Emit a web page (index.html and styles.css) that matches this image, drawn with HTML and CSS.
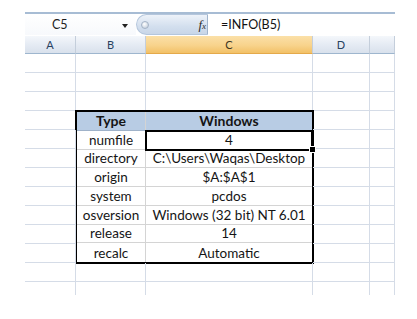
FILE: index.html
```html
<!DOCTYPE html>
<html>
<head>
<meta charset="utf-8">
<link rel="stylesheet" href="styles.css">
</head>
<body>
<div class="sheet">
  <div class="fbar">
    <div class="namebox"><span class="ref">C5</span><span class="arrow"></span></div>
    <div class="capsule">
      <span class="grip"></span>
      <span class="fx"><i>f</i><i class="x">x</i></span>
    </div>
    <div class="formula">=INFO(B5)</div>
  </div>
  <div class="cols">
    <div class="ch">A</div>
    <div class="ch">B</div>
    <div class="ch sel">C</div>
    <div class="ch">D</div>
    <div class="ch"></div>
  </div>
  <div class="grid">
    <div class="c"></div><div class="c"></div><div class="c"></div><div class="c"></div><div class="c"></div>
    <div class="c"></div><div class="c"></div><div class="c"></div><div class="c"></div><div class="c"></div>
    <div class="c"></div><div class="c"></div><div class="c"></div><div class="c"></div><div class="c"></div>

    <div class="c r4"></div>
    <div class="tbl">
      <div class="t th">Type</div><div class="t th">Windows</div>
      <div class="t">numfile</div><div class="t active">4</div>
      <div class="t">directory</div><div class="t">C:\Users\Waqas\Desktop</div>
      <div class="t">origin</div><div class="t">$A:$A$1</div>
      <div class="t">system</div><div class="t">pcdos</div>
      <div class="t">osversion</div><div class="t">Windows (32 bit) NT 6.01</div>
      <div class="t">release</div><div class="t">14</div>
      <div class="t last">recalc</div><div class="t last">Automatic</div>
    </div>
    <div class="c"></div><div class="c"></div>
    <div class="c"></div><div class="c"></div><div class="c"></div>
    <div class="c"></div><div class="c"></div><div class="c"></div>
    <div class="c"></div><div class="c"></div><div class="c"></div>
    <div class="c"></div><div class="c"></div><div class="c"></div>
    <div class="c"></div><div class="c"></div><div class="c"></div>
    <div class="c"></div><div class="c"></div><div class="c"></div>
    <div class="c"></div><div class="c"></div><div class="c"></div>

    <div class="c"></div><div class="c"></div><div class="c"></div><div class="c"></div><div class="c"></div>
    <div class="c end"></div><div class="c end"></div><div class="c end"></div><div class="c end"></div><div class="c end"></div>
  </div>
</div>
</body>
</html>
```

FILE: styles.css
```css
html, body {
  margin: 0;
  padding: 0;
  background: #ffffff;
}
.sheet {
  margin: 12px 0 0 25px;
  width: 370px;
  font-family: Lato, "Open Sans", sans-serif;
  color: #000;
}
.fbar {
  display: flex;
  height: 21px;
  border-top: 2px solid #a7bcd4;
  background: #ffffff;
}
.namebox {
  width: 111px;
  display: flex;
  align-items: center;
  background: linear-gradient(#ffffff, #f7f9fc);
}
.ref {
  margin-left: 27px;
  font-size: 12.5px;
  color: #1e1e1e;
}
.arrow {
  margin-left: 54px;
  width: 0;
  height: 0;
  border-left: 3px solid transparent;
  border-right: 3px solid transparent;
  border-top: 4px solid #222;
  margin-top: 2px;
}
.capsule {
  width: 72px;
  display: flex;
  align-items: center;
  border-radius: 11px 0 0 11px;
  background: linear-gradient(#edf2f9, #d3dfee 60%, #c8d6e8);
  border: 1px solid #b4c6dc;
  border-right: 1px solid #9fb3cc;
  box-sizing: border-box;
  height: 21px;
}
.grip {
  width: 6px;
  height: 6px;
  border-radius: 50%;
  background: radial-gradient(circle at 40% 35%, #ffffff, #b9c6d6);
  border: 1px solid #a4b3c6;
  margin-left: 4px;
}
.fx {
  margin-left: auto;
  margin-right: 1px;
  font-family: "Liberation Serif", serif;
  font-size: 13px;
  color: #2b2b2b;
}
.fx .x {
  font-size: 9px;
}
.formula {
  flex: 1;
  display: flex;
  align-items: center;
  padding-left: 13px;
  font-size: 12.5px;
  color: #111;
}
.cols {
  display: grid;
  grid-template-columns: 51px 70px 167px 57px 25px;
  height: 18px;
  margin-top: 1px;
}
.ch {
  background: linear-gradient(#f4f7fb, #e4eaf3 55%, #d9e1ec);
  border-right: 1px solid #c4cedb;
  border-bottom: 1px solid #9eb6ce;
  font-size: 11px;
  color: #27415f;
  text-align: center;
  line-height: 17px;
}
.ch.sel {
  background: linear-gradient(#fbe0a8, #f8d38c 55%, #f2c167);
  border-bottom-color: #e4a94a;
  color: #3d3520;
}
.grid {
  display: grid;
  grid-template-columns: 51px 70px 167px 57px 25px;
  grid-template-rows: repeat(12, 19px) 13px;
}
.c {
  border-right: 1px solid #d5dce7;
  border-bottom: 1px solid #d5dce7;
}
.c.end {
  border-bottom: none;
}
.tbl {
  grid-column: 2 / 4;
  grid-row: 4 / 12;
  margin: -1px;
  border: 2px solid #000;
  display: grid;
  grid-template-columns: 69px 1fr;
  grid-template-rows: repeat(8, 1fr);
  background: #fff;
  font-size: 13.5px;
}
.t {
  border-bottom: 1px solid #d4d4d4;
  display: flex;
  align-items: center;
  justify-content: center;
  color: #151515;
}
.t:nth-child(odd) {
  border-right: 1px solid #d4d4d4;
}
.t.last {
  border-bottom: none;
}
.t.th {
  background: #b8cce4;
  font-weight: bold;
  font-size: 14px;
  border-bottom-color: #9fb2c9;
}
.t.active {
  position: relative;
  outline: 2px solid #000;
  outline-offset: -1px;
}
.t.active::after {
  content: "";
  position: absolute;
  right: -4px;
  bottom: -4px;
  width: 5px;
  height: 5px;
  background: #000;
  border: 1px solid #fff;
}
```
